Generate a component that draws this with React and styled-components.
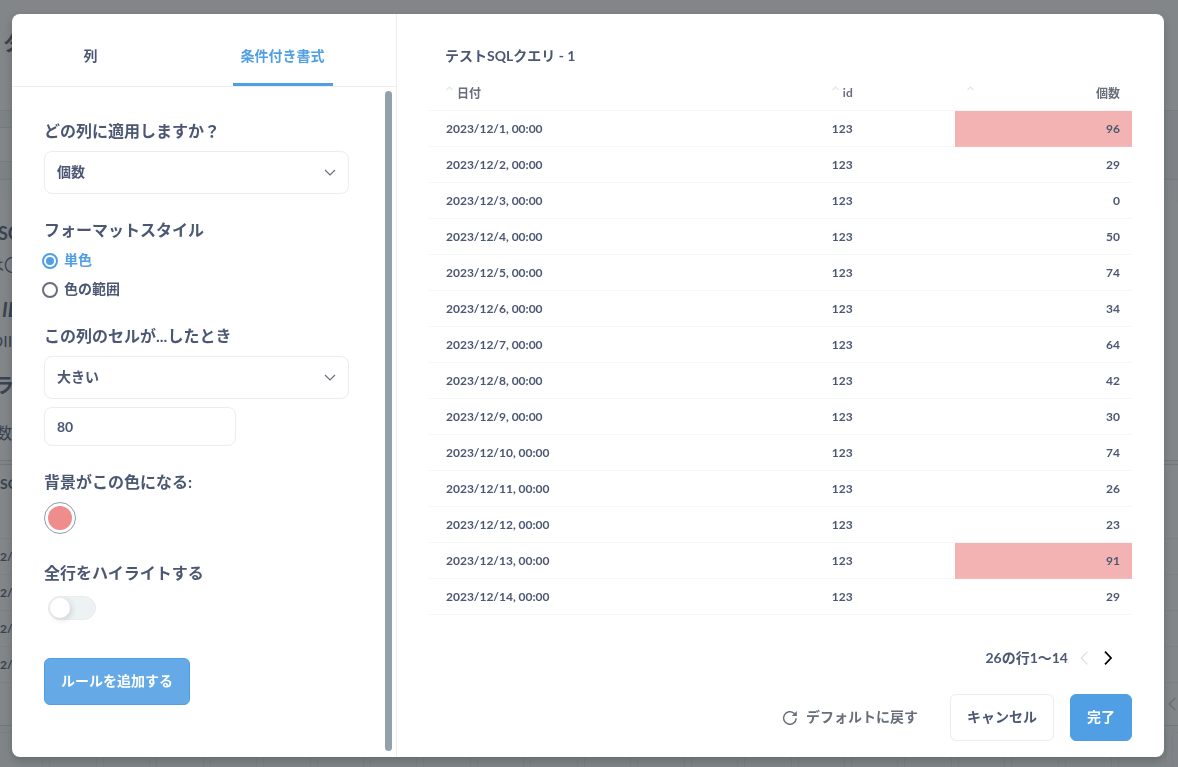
import React, { useState } from 'react';
import styled, { createGlobalStyle } from 'styled-components';

const GlobalStyle = createGlobalStyle`
    * {
        box-sizing: border-box;
    }
    html,
    body,
    #root {
        height: 100%;
    }
    body {
        margin: 0;
        overflow: hidden;
        color: #4c5773;
        background-color: #fff;
        font-family: Lato, 'Noto Sans CJK JP', sans-serif;
        font-size: 14px;
        font-weight: 700;
    }
    button,
    input,
    select {
        color: inherit;
        font: inherit;
    }
`;

/* dashboard */

const Dashboard = styled.div`
    display: flex;
    flex-direction: column;
    height: 100%;
    overflow: hidden;
    background-color: #f9fbfc;
`;

const DashboardHeader = styled.header`
    height: 111px;
    padding: 28px 0 0 3px;
    background-color: #fff;
    border-bottom: 1px solid #e3e6e8;
    font-size: 20px;
    line-height: 30px;
`;

const FilterBar = styled.div`
    height: 69px;
    padding: 16px 0;
    background-color: #f4f6f7;
    border-bottom: 1px solid #e3e6e8;
`;

const FilterBox = styled.div`
    width: 240px;
    height: 35px;
    background-color: #fff;
    border: solid #e3e6e8;
    border-width: 1px 1px 1px 0;
`;

const TextCard = styled.section`
    height: 260px;
    margin-top: 21px;
    padding-top: 16px;
    background-color: #fff;
    border-bottom: 1px solid #d5dadd;
`;

const TextHeading = styled.p`
    margin: 0;
    font-size: ${({ size }) => size}px;
    line-height: 32px;
    font-style: ${({ slanted }) => (slanted ? 'italic' : 'normal')};
    text-indent: ${({ indent = 0 }) => indent}px;
`;

const TextLine = styled.p`
    margin: 0 0 12px;
    font-weight: 400;
    font-size: 16px;
    line-height: 32px;
    white-space: nowrap;
    text-indent: ${({ indent = 0 }) => indent}px;

    &:last-child {
        margin-top: 16px;
    }
`;

const TableCard = styled.section`
    height: 262px;
    margin-top: 3px;
    padding-top: 10px;
    background-color: #fff;
    border: solid #d5dadd;
    border-width: 1px 0;
`;

const CardTitle = styled.div`
    height: 63px;
    line-height: 18px;
`;

const CardRow = styled.div`
    height: 36px;
    border-top: 1px solid #f0f1f2;
    font-size: 12px;
    line-height: 36px;
`;

const CardPager = styled.div`
    display: flex;
    justify-content: flex-end;
    padding: 14px 2px 0;
    border-top: 1px solid #f0f1f2;
    color: #b8bbc3;
`;

const EditGrid = styled.div`
    display: grid;
    grid-template-columns: repeat(23, 1fr);
    gap: 6px;
    flex: 1;
    margin: 6px -41px 0 -4px;
`;

const EditCell = styled.div`
    border: 1px solid #eceff1;
    border-bottom: 0;
`;

/* modal */

const Overlay = styled.div`
    position: fixed;
    inset: 0;
    display: flex;
    padding: 14px 14px 10px 12px;
    background-color: rgba(46, 53, 59, 0.6);
`;

const Modal = styled.div`
    display: grid;
    grid-template-columns: minmax(0, 1fr) minmax(0, 2fr);
    flex: 1;
    background-color: #fff;
    border-radius: 8px;
    box-shadow: 0 4px 10px rgba(0, 0, 0, 0.2);
`;

const Sidebar = styled.aside`
    display: flex;
    flex-direction: column;
`;

const TabList = styled.div`
    display: flex;
    justify-content: space-around;
    height: 73px;
    border-bottom: 1px solid #eeecec;
`;

const Tab = styled.button`
    padding: 12px 8px 0;
    color: ${({ active }) => (active ? '#509ee3' : 'inherit')};
    background-color: transparent;
    border: 0 solid ${({ active }) => (active ? '#509ee3' : 'transparent')};
    border-bottom-width: 3px;
    cursor: pointer;
`;

const SidebarBody = styled.div`
    display: flex;
    flex: 1;
    min-height: 0;
`;

const ScrollThumb = styled.div`
    width: 7px;
    margin: 4px 4px 6px 0;
    background-color: #93a1ab;
    border-radius: 4px;
`;

const Form = styled.form`
    flex: 1;
    min-width: 0;
    padding: 32px 36px 0 32px;
`;

const Field = styled.fieldset`
    display: flex;
    flex-direction: column;
    align-items: flex-start;
    min-width: 0;
    margin: 0 0 ${({ space = 24 }) => space}px;
    padding: 0;
    border: 0;
`;

const FieldLabel = styled.label`
    margin-bottom: ${({ space = 8 }) => space}px;
    font-size: 16px;
    line-height: 24px;
`;

const SelectBox = styled.div`
    position: relative;
    width: 100%;

    svg {
        position: absolute;
        top: 16px;
        right: 13px;
        pointer-events: none;
    }
`;

const Select = styled.select`
    display: block;
    width: 100%;
    height: 43px;
    padding: 0 12px 2px;
    appearance: none;
    background-color: #fff;
    border: 1px solid #eeecec;
    border-radius: 8px;
`;

const ValueInput = styled.input`
    width: 192px;
    height: 39px;
    margin-top: 8px;
    padding: 0 12px;
    border: 1px solid #eeecec;
    border-radius: 8px;
`;

const RadioLabel = styled.label`
    display: flex;
    align-items: center;
    gap: 6px;
    height: 29px;
    margin-left: -2px;
    color: ${({ checked }) => (checked ? '#509ee3' : 'inherit')};
    cursor: pointer;
`;

const RadioText = styled.span`
    padding-bottom: 4px;
`;

const Radio = styled.input`
    width: 16px;
    height: 16px;
    margin: 0;
    appearance: none;
    border: 2px solid #696e7b;
    border-radius: 50%;

    &:checked {
        padding: 2px;
        background: #509ee3 content-box;
        border-color: #509ee3;
    }
`;

const ColorPill = styled.button`
    width: 32px;
    height: 32px;
    padding: 3px;
    background: #ef8c8c content-box;
    border: 1px solid #949aab;
    border-radius: 50%;
    cursor: pointer;
`;

const Toggle = styled.input`
    width: 48px;
    height: 24px;
    margin: 0 4px;
    appearance: none;
    background-color: #edf2f5;
    border: 1px solid #eeecec;
    border-radius: 12px;
    cursor: pointer;

    &::after {
        content: '';
        display: block;
        width: 20px;
        height: 20px;
        margin: 1px;
        background-color: #fff;
        border-radius: 50%;
        box-shadow: 2px 2px 6px rgba(0, 0, 0, 0.13);
    }
    &:checked {
        background-color: #509ee3;
    }
    &:checked::after {
        margin-left: 25px;
    }
`;

const Button = styled.button`
    height: 47px;
    padding: 0 16px 3px;
    color: ${({ primary }) => (primary ? '#fff' : 'inherit')};
    background-color: ${({ primary }) => (primary ? '#509ee3' : '#fff')};
    border: 1px solid ${({ primary }) => (primary ? '#509ee3' : '#eeecec')};
    border-radius: 6px;
    cursor: pointer;
`;

const AddButton = styled(Button)`
    background-color: #65a9e6;
`;

const Main = styled.main`
    display: flex;
    flex-direction: column;
    padding: 30px 32px 16px;
    border-left: 1px solid #eeecec;
`;

const Title = styled.h2`
    margin: 0;
    padding-left: 16px;
    font-size: 14px;
    line-height: 24px;
`;

const Table = styled.table`
    width: 100%;
    margin-top: 8px;
    table-layout: fixed;
    border-collapse: separate;
    border-spacing: 0;
    font-size: 12px;
`;

const DateCol = styled.col`
    width: 55.6%;
`;

const IdCol = styled.col`
    width: 19.2%;
`;

const HeadCell = styled.th`
    height: 35px;
    padding: 0 12px 2px ${({ first }) => (first ? 17 : 12)}px;
    color: #696e7b;
    border-bottom: 1px solid #f5f6f6;
`;

const HeadContent = styled.div`
    display: flex;
    align-items: center;
    justify-content: ${({ spread }) => (spread ? 'space-between' : 'flex-start')};
    gap: 4px;

    svg {
        margin-bottom: 8px;
    }
`;

const Cell = styled.td`
    height: 36px;
    padding: 0 12px 0 ${({ first }) => (first ? 17 : 12)}px;
    text-align: ${({ right }) => (right ? 'right' : 'left')};
    background-color: ${({ marked }) => (marked ? '#f4b3b3' : 'transparent')};
    border-bottom: 1px solid ${({ marked }) => (marked ? '#f4b9b9' : '#f5f6f6')};
`;

const Pager = styled.div`
    display: flex;
    align-items: center;
    justify-content: flex-end;
    margin-top: auto;
    padding-right: 12px;
`;

const PageButton = styled.button`
    display: flex;
    padding: 4px 8px;
    color: #000;
    background-color: transparent;
    border: 0;
    cursor: pointer;

    &:disabled {
        color: #dcdfe0;
        cursor: default;
    }
`;

const PageText = styled.span`
    margin-right: 4px;
    padding-bottom: 2px;
`;

const Footer = styled.footer`
    display: flex;
    justify-content: flex-end;
    gap: 16px;
    margin-top: 25px;
`;

const ResetButton = styled.button`
    display: flex;
    align-items: center;
    gap: 8px;
    padding: 0 16px;
    color: #696e7b;
    background-color: transparent;
    border: 0;
    cursor: pointer;
`;

const ResetText = styled.span`
    padding-bottom: 3px;
`;

const ChevronDown = () => (
    <svg width="12" height="12" viewBox="0 0 12 12" fill="none" stroke="#696e7b" strokeWidth="1.2">
        <path d="M1 3l5 5 5-5" />
    </svg>
);

const SortCaret = () => (
    <svg width="7" height="5" viewBox="0 0 7 5" fill="none" stroke="#e3e5e8" strokeWidth="1.2">
        <path d="M0.5 4l3-3 3 3" />
    </svg>
);

const PageChevron = ({ next }) => (
    <svg width="8" height="14" viewBox="0 0 8 14" fill="none" stroke="currentColor" strokeWidth={next ? 1.7 : 1.2}>
        <path d={next ? 'M1 0.7l6 6.3-6 6.3' : 'M7.5 0.7l-6.3 6.3 6.3 6.3'} />
    </svg>
);

const RefreshIcon = () => (
    <svg width="16" height="16" viewBox="0 0 16 16" fill="none" stroke="currentColor" strokeWidth="1.5">
        <path d="M14.2 8.4a6.3 6.3 0 1 1-2.2-5.2l1 1" />
        <path d="M14.8 1v5h-5z" fill="currentColor" stroke="none" />
    </svg>
);

const counts = [96, 29, 0, 50, 74, 34, 64, 42, 30, 74, 26, 23, 91, 29];

const DashboardPage = () => (
    <Dashboard aria-hidden="true">
        <DashboardHeader>タ</DashboardHeader>
        <FilterBar>
            <FilterBox />
        </FilterBar>
        <TextCard>
            <TextHeading size={18} indent={-2}>SQ</TextHeading>
            <TextLine indent={-12}>は〇</TextLine>
            <TextHeading size={20} indent={2} slanted>IL</TextHeading>
            <TextLine indent={-9}>DII</TextLine>
            <TextHeading size={20} indent={-6}>ラ</TextHeading>
            <TextLine indent={-4}>数</TextLine>
        </TextCard>
        <TableCard>
            <CardTitle>SQ</CardTitle>
            {[1, 2, 3, 4].map((day) => (
                <CardRow key={day}>2/{day}</CardRow>
            ))}
            <CardPager>
                <PageChevron />
            </CardPager>
        </TableCard>
        <EditGrid>
            {Array.from({ length: 23 }, (_, index) => (
                <EditCell key={index} />
            ))}
        </EditGrid>
    </Dashboard>
);

const RuleForm = () => {
    const [column, setColumn] = useState('count');
    const [style, setStyle] = useState('single');
    const [operator, setOperator] = useState('gt');
    const [value, setValue] = useState('80');
    const [highlight, setHighlight] = useState(false);

    return (
        <Form onSubmit={(evt) => evt.preventDefault()}>
            <Field>
                <FieldLabel htmlFor="column">どの列に適用しますか？</FieldLabel>
                <SelectBox>
                    <Select id="column" value={column} onChange={(evt) => setColumn(evt.target.value)}>
                        <option value="count">個数</option>
                        <option value="id">id</option>
                    </Select>
                    <ChevronDown />
                </SelectBox>
            </Field>
            <Field space={20}>
                <FieldLabel as="span" space={4}>フォーマットスタイル</FieldLabel>
                <RadioLabel checked={style === 'single'}>
                    <Radio type="radio" name="style" checked={style === 'single'} onChange={() => setStyle('single')} />
                    <RadioText>単色</RadioText>
                </RadioLabel>
                <RadioLabel checked={style === 'range'}>
                    <Radio type="radio" name="style" checked={style === 'range'} onChange={() => setStyle('range')} />
                    <RadioText>色の範囲</RadioText>
                </RadioLabel>
            </Field>
            <Field>
                <FieldLabel htmlFor="operator">この列のセルが...したとき</FieldLabel>
                <SelectBox>
                    <Select id="operator" value={operator} onChange={(evt) => setOperator(evt.target.value)}>
                        <option value="gt">大きい</option>
                        <option value="lt">小さい</option>
                    </Select>
                    <ChevronDown />
                </SelectBox>
                <ValueInput aria-label="値" value={value} onChange={(evt) => setValue(evt.target.value)} />
            </Field>
            <Field space={27}>
                <FieldLabel htmlFor="color">背景がこの色になる:</FieldLabel>
                <ColorPill id="color" type="button" />
            </Field>
            <Field space={38}>
                <FieldLabel htmlFor="highlight" space={11}>全行をハイライトする</FieldLabel>
                <Toggle
                    id="highlight"
                    type="checkbox"
                    checked={highlight}
                    onChange={(evt) => setHighlight(evt.target.checked)}
                />
            </Field>
            <AddButton primary type="submit">ルールを追加する</AddButton>
        </Form>
    );
};

const ResultTable = () => (
    <Table>
        <colgroup>
            <DateCol />
            <IdCol />
            <col />
        </colgroup>
        <thead>
            <tr>
                <HeadCell first>
                    <HeadContent><SortCaret />日付</HeadContent>
                </HeadCell>
                <HeadCell>
                    <HeadContent><SortCaret />id</HeadContent>
                </HeadCell>
                <HeadCell>
                    <HeadContent spread><SortCaret />個数</HeadContent>
                </HeadCell>
            </tr>
        </thead>
        <tbody>
            {counts.map((count, index) => (
                <tr key={index}>
                    <Cell first>2023/12/{index + 1}, 00:00</Cell>
                    <Cell>123</Cell>
                    <Cell right marked={count > 80}>{count}</Cell>
                </tr>
            ))}
        </tbody>
    </Table>
);

const App = () => (
    <>
        <GlobalStyle />
        <DashboardPage />
        <Overlay>
            <Modal role="dialog" aria-label="テストSQLクエリ - 1">
                <Sidebar>
                    <TabList role="tablist">
                        <Tab role="tab">列</Tab>
                        <Tab role="tab" active aria-selected="true">条件付き書式</Tab>
                    </TabList>
                    <SidebarBody>
                        <RuleForm />
                        <ScrollThumb />
                    </SidebarBody>
                </Sidebar>
                <Main>
                    <Title>テストSQLクエリ - 1</Title>
                    <ResultTable />
                    <Pager>
                        <PageText>26の行1〜14</PageText>
                        <PageButton disabled aria-label="前へ"><PageChevron /></PageButton>
                        <PageButton aria-label="次へ"><PageChevron next /></PageButton>
                    </Pager>
                    <Footer>
                        <ResetButton><RefreshIcon /><ResetText>デフォルトに戻す</ResetText></ResetButton>
                        <Button>キャンセル</Button>
                        <Button primary>完了</Button>
                    </Footer>
                </Main>
            </Modal>
        </Overlay>
    </>
);

export default App;
